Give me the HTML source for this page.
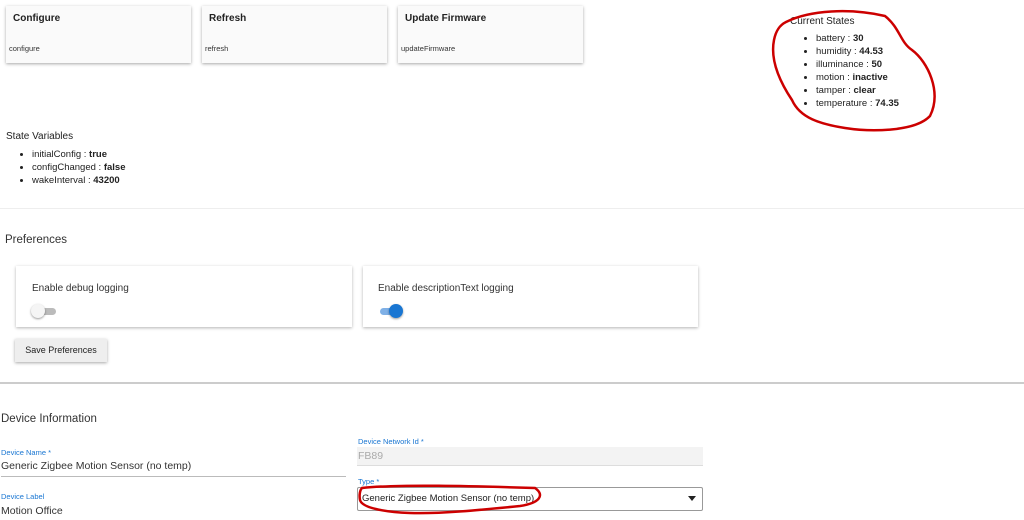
<!DOCTYPE html>
<html><head><meta charset="utf-8"><style>
body{margin:0;width:1024px;height:520px;overflow:hidden;background:#fff;font-family:"Liberation Sans",sans-serif;color:#222;position:relative}
.a{position:absolute}
.card{position:absolute;background:#fafafa;box-shadow:0 1px 3px rgba(0,0,0,.35);}
.cmd .t{position:absolute;left:7px;top:7px;font-size:10px;font-weight:bold;color:#222}
.cmd .s{position:absolute;left:3px;top:38px;font-size:7.5px;color:#333}
ul{margin:0;padding-left:26px;font-size:9.5px;line-height:13px}
ul b{font-weight:bold}
.pc{background:#fff;box-shadow:0 1px 3px rgba(0,0,0,.3)}
.lbl{font-size:7.5px;color:#1976d2}
</style></head><body>
<div class="card cmd" style="left:6px;top:6px;width:185px;height:57px"><div class="t">Configure</div><div class="s">configure</div></div>
<div class="card cmd" style="left:202px;top:6px;width:185px;height:57px"><div class="t">Refresh</div><div class="s">refresh</div></div>
<div class="card cmd" style="left:398px;top:6px;width:185px;height:57px"><div class="t">Update Firmware</div><div class="s">updateFirmware</div></div>

<div class="a" style="left:790px;top:16px;font-size:10px">Current States</div>
<ul class="a" style="left:790px;top:32px"><li>battery : <b>30</b></li><li>humidity : <b>44.53</b></li><li>illuminance : <b>50</b></li><li>motion : <b>inactive</b></li><li>tamper : <b>clear</b></li><li>temperature : <b>74.35</b></li></ul>

<div class="a" style="left:6px;top:131px;font-size:10px">State Variables</div>
<ul class="a" style="left:6px;top:148px"><li>initialConfig : <b>true</b></li><li>configChanged : <b>false</b></li><li>wakeInterval : <b>43200</b></li></ul>

<div class="a" style="left:0;top:208px;width:1024px;height:1px;background:#eee"></div>
<div class="a" style="left:5px;top:234px;font-size:11.5px;color:#333">Preferences</div>
<div class="card pc" style="left:16px;top:266px;width:336px;height:61px"><div class="a" style="left:16px;top:17px;font-size:10px;color:#333">Enable debug logging</div>
<div class="a" style="left:18px;top:42px;width:22px;height:7px;border-radius:4px;background:#bbb"></div><div class="a" style="left:15px;top:38px;width:14px;height:14px;border-radius:50%;background:#f5f5f5;box-shadow:0 1px 2px rgba(0,0,0,.4)"></div></div>
<div class="card pc" style="left:363px;top:266px;width:335px;height:61px"><div class="a" style="left:15px;top:17px;font-size:10px;color:#333">Enable descriptionText logging</div>
<div class="a" style="left:17px;top:42px;width:22px;height:7px;border-radius:4px;background:#7fb0e6"></div><div class="a" style="left:26px;top:38px;width:14px;height:14px;border-radius:50%;background:#1976d2;box-shadow:0 1px 2px rgba(0,0,0,.4)"></div></div>
<div class="card" style="left:15px;top:339px;width:92px;height:23px;background:#eee;font-size:9px;line-height:23px;text-align:center;color:#222">Save Preferences</div>
<div class="a" style="left:0;top:382px;width:1024px;height:2px;background:#ccc"></div>

<div class="a" style="left:1px;top:413px;font-size:11.5px;color:#333">Device Information</div>
<div class="a lbl" style="left:1px;top:448px">Device Name *</div>
<div class="a" style="left:1px;top:460px;font-size:10.5px;color:#333">Generic Zigbee Motion Sensor (no temp)</div>
<div class="a" style="left:1px;top:476px;width:345px;height:1px;background:#bbb"></div>
<div class="a lbl" style="left:1px;top:492px">Device Label</div>
<div class="a" style="left:1px;top:505px;font-size:10.5px;color:#333">Motion Office</div>
<div class="a lbl" style="left:358px;top:437px">Device Network Id *</div>
<div class="a" style="left:357px;top:447px;width:346px;height:18px;background:#f3f3f3;border-bottom:1px solid #ddd"></div>
<div class="a" style="left:358px;top:450px;font-size:10.5px;color:#aaa">FB89</div>
<div class="a lbl" style="left:358px;top:477px">Type *</div>
<div class="a" style="left:357px;top:487px;width:344px;height:22px;border:1px solid #999;border-radius:2px"></div>
<div class="a" style="left:362px;top:493px;font-size:9.5px;color:#222">Generic Zigbee Motion Sensor (no temp)</div>
<div class="a" style="left:688px;top:496px;width:0;height:0;border-left:4px solid transparent;border-right:4px solid transparent;border-top:5px solid #222"></div>

<svg class="a" style="left:0;top:0" width="1024" height="520"><g fill="none" stroke="#c00" stroke-width="2.5" stroke-linecap="round">
<path d="M786,22 C810,10 850,8 885,16 C900,28 900,42 912,50 C928,62 942,92 930,116 C915,132 870,132 845,128 C820,124 800,118 792,100 C780,82 770,60 774,40 C776,30 780,25 786,22"/>
<path d="M362,488 C400,484 470,486 535,488 C545,495 540,503 520,506 C480,510 440,514 410,513 C385,512 362,508 360,500 C359,495 360,490 362,488"/>
</g></svg>
</body></html>
